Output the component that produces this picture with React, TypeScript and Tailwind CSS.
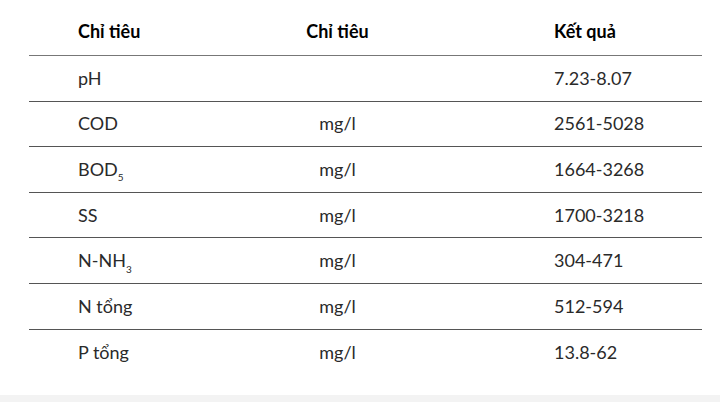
const rows: { name: React.ReactNode; unit: string; value: string }[] = [
  { name: 'pH', unit: '', value: '7.23-8.07' },
  { name: 'COD', unit: 'mg/l', value: '2561-5028' },
  {
    name: (
      <>
        BOD<sub className="text-[10px] align-[-3px]">5</sub>
      </>
    ),
    unit: 'mg/l',
    value: '1664-3268',
  },
  { name: 'SS', unit: 'mg/l', value: '1700-3218' },
  {
    name: (
      <>
        N-NH<sub className="text-[10px] align-[-3px]">3</sub>
      </>
    ),
    unit: 'mg/l',
    value: '304-471',
  },
  { name: 'N tổng', unit: 'mg/l', value: '512-594' },
  { name: 'P tổng', unit: 'mg/l', value: '13.8-62' },
];

export default function App() {
  return (
    <div className="w-[720px] h-[402px] bg-white flex flex-col font-['Lato','Noto_Sans',sans-serif] text-[#2a2a2a]">
      <div className="flex-1">
        <div className="ml-[29px] w-[673px]">
          {/* header */}
          <div className="grid grid-cols-[200px_217px_1fr] h-[56px] items-end pb-[10px] border-b border-[#777] text-[18px] font-bold text-[#000]">
            <div className="pl-[49px]">Chỉ tiêu</div>
            <div className="text-center">Chỉ tiêu</div>
            <div className="pl-[108px]">Kết quả</div>
          </div>

          {rows.map((r, i) => (
            <div
              key={i}
              className={
                'grid grid-cols-[200px_217px_1fr] h-[45.6px] items-center text-[18px] ' +
                (i < rows.length - 1 ? 'border-b border-[#555]' : '')
              }
            >
              <div className="pl-[49px]">{r.name}</div>
              <div className="text-center">{r.unit}</div>
              <div className="pl-[108px]">{r.value}</div>
            </div>
          ))}
        </div>
      </div>
      <div className="h-[7px] bg-[#f3f3f3]" />
    </div>
  );
}
